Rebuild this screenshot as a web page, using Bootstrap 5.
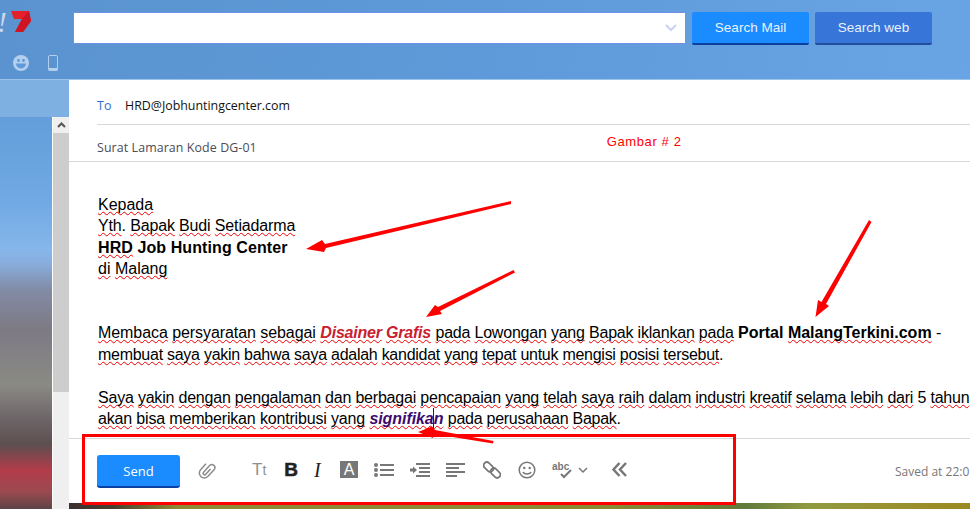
<!DOCTYPE html>
<html lang="id">
<head>
<meta charset="UTF-8">
<title>Compose</title>
<link href="https://cdn.jsdelivr.net/npm/bootstrap@5.3.0/dist/css/bootstrap.min.css" rel="stylesheet">
<style>
html, body { height: 100%; overflow: hidden; }
body { width: 970px; height: 509px; font-family: "Liberation Sans", Arial, sans-serif; background: #fff; position: relative; }
.topbar { height: 80px; background: linear-gradient(100deg, #5a93cf 0%, #5e9ad9 50%, #69a5e4 100%); border-bottom: 1px solid #9cc3ec; }
.search-row { height: 44px; padding-top: 12px; }
.logo-zone { width: 73px; height: 32px; padding-right: 41px; overflow: hidden; margin-top: -1px; }
.logo-word { font: italic 29px/22px "Liberation Serif", serif; color: #c9d8ea; white-space: nowrap; padding-right: 4px; }
.search-input { width: 612px; height: 32px; background: #fff; border: 1px solid #6f8fe8; border-right: 0; }
.search-btn { width: 117px; height: 33px; padding: 0; border: 0; border-radius: 2px; color: #e8f1ff; font-size: 13.5px; line-height: 30px; }
.search-mail { margin-left: 7px; background: #1a8cff; border-bottom: 2px solid #0b3fa0; }
.search-web { margin-left: 6px; background: #3775d9; border-bottom: 2px solid #234e9e; }
.top-icons { padding: 11px 0 0 13px; gap: 19px; }
.side { width: 69px; height: 429px; background: linear-gradient(180deg, #639edb 8.600%, #70a9e3 28%, #86b6ea 39.600%, #88aede 42.600%, #828ba5 49%, #7d7a84 58%, #8a8a84 71%, #6d6568 79%, #5d4f50 85%, #b33c4a 91%, #9a4a50 96%, #5f4345 100%); }
.side-top { height: 37px; background: #7eb0e2; }
.scroll-col { width: 16px; margin-left: 53px; background: #efefef; height: 392px; box-shadow: -1px 0 0 #fff; }
.scroll-arrow { height: 16px; }
.scroll-thumb { height: 259px; background: #cdcdcd; }
.compose { width: 901px; height: 423px; background: #fff; }
.field-to { height: 45px; margin-left: 28px; border-bottom: 1px solid #d8d8d8; font: 12.4px "Open Sans", sans-serif; color: #111; padding-top: 17px; }
.to-label { width: 28px; color: #2f6fd0; font-size: 12.5px; }
.field-subj { height: 37px; border-bottom: 1px solid #d8d8d8; padding: 14px 0 0 28px; font: 12.4px "Open Sans", sans-serif; color: #4b4b55; letter-spacing: .1px; }
.gambar { margin-left: 350px; margin-top: -5px; font: 13px "Liberation Sans", sans-serif; color: #f00; letter-spacing: .6px; }
.letter { height: 277px; padding: 32px 0 0 29px; font-size: 16px; line-height: 21.4px; color: #000; white-space: nowrap; overflow: hidden; border-bottom: 1px solid #d8d8d8; }
.sp { text-decoration: underline wavy #e00; text-decoration-thickness: 1px; text-underline-offset: 1px; text-decoration-skip-ink: none; }
.gap-line { height: 21.4px; }
.tint-red { color: #c8202f; }
.tint-purple { color: #3c0a6e; }
.ls-a { letter-spacing: -.07px; }
.ls-b { letter-spacing: -.15px; }
.ls-c { letter-spacing: -.21px; }
.ls-d { letter-spacing: -.27px; }
.ls-e { letter-spacing: .09px; }
.ls-f { letter-spacing: -.17px; }
.toolbar { height: 64px; padding-left: 28px; overflow: hidden; white-space: nowrap; }
.send-btn { width: 83px; height: 33px; flex-shrink: 0; background: #1a8cff; border: 0; border-bottom: 2px solid #0b3fa0; border-radius: 3px; color: #fff; font: 13px "Open Sans", sans-serif; line-height: 33px; padding: 0; }
.tbtn { display: block; flex-shrink: 0; margin-left: 16px; margin-bottom: 3px; color: #777; }
.t-clip { margin-left: 18px; }
.t-size { margin-left: 36px; color: #8f8f8f; line-height: 18px; font-size: 17px; }
.t-size small { font-size: 14px; }
.t-bold { margin-left: 18px; font-weight: 700; font-size: 19px; line-height: 20px; color: #222; -webkit-text-stroke: .5px #222; }
.t-ital { width: 9px; font: italic 20px/20px "Liberation Serif", serif; color: #222; }
.t-color { margin-left: 17px; width: 18px; height: 17px; background: #777; color: #fff; font-size: 16px; line-height: 17px; text-align: center; }
.t-link { margin-left: 17px; }
.t-more { margin-left: 24px; }
.saved { flex-shrink: 0; margin-left: 268px; font: 12px "Open Sans", sans-serif; color: #777; }
.bottom-strip { height: 6px; background: linear-gradient(90deg, #3c3030 0%, #4a4030 5%, #8f8a35 12%, #8a8a35 60%, #607a3a 75%, #8f9a40 82%, #9a9030 92%, #9a8a20 100%); }
.note-box { position: absolute; left: 82px; top: 434px; width: 654px; height: 71px; border: 3px solid #f00; }
.arrows { position: absolute; left: 0; top: 0; }
.caret-line { position: absolute; left: 433px; top: 408px; width: 1px; height: 20px; background: #3c0a6e; }
</style>
</head>
<body>
<div class="topbar">
  <div class="d-flex search-row">
    <div class="logo-zone d-flex justify-content-end">
      <span class="logo-word">o!</span>
      <svg class="flex-shrink-0" width="21" height="22" viewBox="12 11 21 22"><polygon points="12,11 30,11 32,21 24,32 16,32 23,19 15,19" fill="#e3202c"/><polygon points="30,11 32,21 24,32 16,32 23,19" fill="#cf1424"/></svg>
    </div>
    <div class="search-input d-flex justify-content-end align-items-center pe-2">
      <svg width="12" height="8" viewBox="0 0 12 8"><path d="M1 1l5 5 5-5" fill="none" stroke="#ccd3f2" stroke-width="2"/></svg>
    </div>
    <button class="search-btn search-mail">Search Mail</button>
    <button class="search-btn search-web">Search web</button>
  </div>
  <div class="d-flex align-items-center top-icons">
    <svg width="16" height="16" viewBox="0 0 16 16"><circle cx="8" cy="8" r="8" fill="#b4cfee"/><circle cx="5.500" cy="5.500" r="1.400" fill="#5e9ad9"/><circle cx="10.500" cy="5.500" r="1.400" fill="#5e9ad9"/><path d="M3 8.500h10a5 5 0 0 1-10 0z" fill="#5e9ad9"/></svg>
    <svg width="10" height="16" viewBox="0 0 10 16"><rect x=".5" y=".5" width="9" height="15" rx="1.500" fill="none" stroke="#b4cfee"/><rect x=".5" y="13" width="9" height="2.500" fill="#b4cfee"/></svg>
  </div>
</div>
<div class="d-flex">
  <div class="side flex-shrink-0">
    <div class="side-top"></div>
    <div class="scroll-col">
      <div class="scroll-arrow d-flex align-items-center justify-content-center"><svg width="9" height="6" viewBox="0 0 9 6"><path d="M1 5l3.500-3.500L8 5" fill="none" stroke="#555" stroke-width="2"/></svg></div>
      <div class="scroll-thumb"></div>
    </div>
  </div>
  <div>
    <div class="compose">
      <div class="field-to d-flex"><span class="to-label">To</span><span>HRD@Jobhuntingcenter.com</span></div>
      <div class="field-subj d-flex"><span>Surat Lamaran Kode DG-01</span><span class="gambar">Gambar # 2</span></div>
      <div class="letter">
        <div><span class="sp">Kepada</span></div>
        <div class="ls-b"><span class="sp">Yth</span>. <span class="sp">Bapak</span> <span class="sp">Budi</span> <span class="sp">Setiadarma</span></div>
        <div class="ls-e"><strong><span class="sp">HRD</span> Job Hunting Center</strong></div>
        <div><span class="sp">di</span> <span class="sp">Malang</span></div>
        <div class="gap-line"></div>
        <div class="gap-line"></div>
        <div><span class="ls-a"><span class="sp">Membaca</span> <span class="sp">persyaratan</span> <span class="sp">sebagai</span></span> <strong class="fst-italic tint-red ls-c"><span class="sp">Disainer</span> <span class="sp">Grafis</span></strong> <span class="ls-c"><span class="sp">pada</span> <span class="sp">Lowongan</span> <span class="sp">yang</span> <span class="sp">Bapak</span> <span class="sp">iklankan</span> <span class="sp">pada</span></span> <strong>Portal <span class="sp">MalangTerkini.com</span></strong> -</div>
        <div class="ls-d"><span class="sp">membuat</span> <span class="sp">saya</span> <span class="sp">yakin</span> <span class="sp">bahwa</span> <span class="sp">saya</span> <span class="sp">adalah</span> <span class="sp">kandidat</span> <span class="sp">yang</span> <span class="sp">tepat</span> <span class="sp">untuk</span> <span class="sp">mengisi</span> <span class="sp">posisi</span> <span class="sp">tersebut</span>.</div>
        <div class="gap-line"></div>
        <div class="ls-c"><span class="sp">Saya</span> <span class="sp">yakin</span> <span class="sp">dengan</span> <span class="sp">pengalaman</span> <span class="sp">dan</span> <span class="sp">berbagai</span> <span class="sp">pencapaian</span> <span class="sp">yang</span> <span class="sp">telah</span> <span class="sp">saya</span> <span class="sp">raih</span> <span class="sp">dalam</span> <span class="sp">industri</span> <span class="sp">kreatif</span> <span class="sp">selama</span> <span class="sp">lebih</span> <span class="sp">dari</span> 5 <span class="sp">tahun</span></div>
        <div><span class="ls-f"><span class="sp">akan</span> <span class="sp">bisa</span> <span class="sp">memberikan</span> <span class="sp">kontribusi</span> <span class="sp">yang</span></span> <strong class="fst-italic tint-purple ls-a"><span class="sp">signifikan</span></strong> <span class="ls-d"><span class="sp">pada</span> <span class="sp">perusahaan</span> <span class="sp">Bapak</span>.</span></div>
      </div>
      <div class="toolbar d-flex align-items-center">
        <button class="send-btn">Send</button>
        <svg class="tbtn t-clip" width="18" height="18" viewBox="0 0 18 18"><path transform="rotate(42 9 9)" d="M4 5v8a5 5 0 0 0 10 0V4a3 3 0 0 0-6 0v9a1.500 1.500 0 0 0 3 0V6" fill="none" stroke="#8c8c8c" stroke-width="1.500"/></svg>
        <span class="tbtn t-size">T<small>t</small></span>
        <span class="tbtn t-bold">B</span>
        <span class="tbtn t-ital">I</span>
        <span class="tbtn t-color">A</span>
        <svg class="tbtn" width="20" height="16" viewBox="0 0 20 16"><g fill="#777"><circle cx="2" cy="3" r="2"/><circle cx="2" cy="8" r="2"/><circle cx="2" cy="13" r="2"/><rect x="6" y="2" width="14" height="2"/><rect x="6" y="7" width="14" height="2"/><rect x="6" y="12" width="14" height="2"/></g></svg>
        <svg class="tbtn" width="20" height="16" viewBox="0 0 20 16"><g fill="#777"><rect x="6" y="1" width="14" height="2"/><rect x="9" y="5" width="11" height="2"/><rect x="9" y="9" width="11" height="2"/><rect x="6" y="13" width="14" height="2"/><path d="M0 6.500h3V4.500L7 8l-4 3.500V9.500H0z"/></g></svg>
        <svg class="tbtn" width="20" height="16" viewBox="0 0 20 16"><g fill="#777"><rect x="0" y="1" width="19" height="2"/><rect x="0" y="5" width="13" height="2"/><rect x="0" y="9" width="19" height="2"/><rect x="0" y="13" width="11" height="2"/></g></svg>
        <svg class="tbtn t-link" width="18" height="18" viewBox="0 0 18 18"><g fill="none" stroke="#777" stroke-width="1.700"><rect x="0" y="2.800" width="11" height="6.400" rx="3.200" transform="rotate(45 5.500 6)"/><rect x="7" y="8.800" width="11" height="6.400" rx="3.200" transform="rotate(45 12.500 12)"/></g></svg>
        <svg class="tbtn t-link" width="18" height="18" viewBox="0 0 18 18"><circle cx="9" cy="9" r="7.800" fill="none" stroke="#777" stroke-width="1.500"/><circle cx="6.300" cy="7" r="1.200" fill="#777"/><circle cx="11.700" cy="7" r="1.200" fill="#777"/><path d="M5 11c1 2.500 7 2.500 8 0" fill="none" stroke="#777" stroke-width="1.500"/></svg>
        <svg class="tbtn" width="36" height="18" viewBox="0 0 36 18"><text x="0" y="9" font-size="10" font-weight="700" font-family="Liberation Sans, sans-serif" fill="#777">abc</text><path d="M9 13l3 3 7-7" fill="none" stroke="#777" stroke-width="2"/><path d="M27 7l4 4 4-4" fill="none" stroke="#777" stroke-width="1.500"/></svg>
        <svg class="tbtn t-more" width="15" height="15" viewBox="0 0 15 15"><path d="M7.500 1L1.500 7.500 7.500 14M14 1L8 7.500 14 14" fill="none" stroke="#777" stroke-width="2.500"/></svg>
        <span class="saved">Saved at 22:0</span>
      </div>
    </div>
    <div class="bottom-strip"></div>
  </div>
</div>

<div class="caret-line"></div>
<div class="note-box"></div>
<svg class="arrows" width="970" height="509" viewBox="0 0 970 509">
  <g fill="#f00">
    <polygon points="511,201 511,204 326,248 324,252 306,249 322,240 325,244"/>
    <polygon points="513.500,270 515,272.500 440,311 442,314 426,317 435,305 438,307"/>
    <polygon points="869,220 871.500,222 826,304 829,306 815.500,317 818,300 821.500,302"/>
    <polygon points="493.500,441 493,443.500 434,434 433,438 418,432 432,426.500 435,430"/>
  </g>
</svg>
<script src="https://cdn.jsdelivr.net/npm/bootstrap@5.3.0/dist/js/bootstrap.bundle.min.js"></script>
</body>
</html>
